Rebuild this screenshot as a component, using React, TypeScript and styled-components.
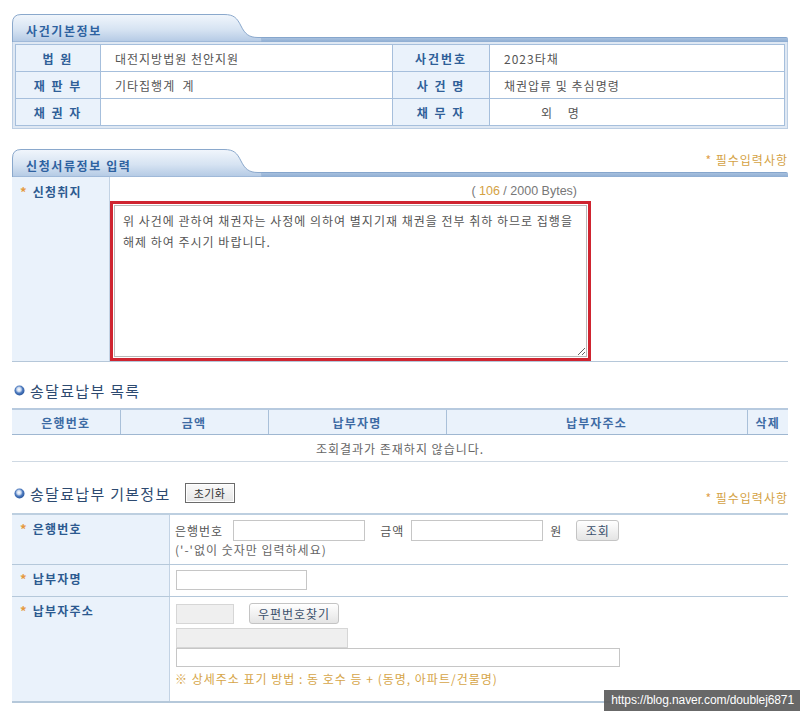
import React from 'react';
import styled, { createGlobalStyle } from 'styled-components';

const GlobalStyle = createGlobalStyle`
  html, body { margin: 0; padding: 0; background: #fff; }
  body {
    font-family: "Noto Sans CJK KR", "Liberation Sans", sans-serif;
    font-size: 12px;
    letter-spacing: 1px;
    color: #555;
  }
`;

const Page = styled.div`
  position: relative;
  width: 800px;
  height: 711px;
  overflow: hidden;
  box-sizing: border-box;
  padding: 14px 12px 0;
`;

// 탭 헤더 (사건기본정보 / 신청서류정보 입력)
const TabHeader = styled.div`
  display: flex;
  align-items: stretch;
  height: 28px;
`;

const Tab = styled.div`
  flex: 0 0 250px;
  display: grid;
  & > * { grid-area: 1 / 1; }
`;

const TabLabel = styled.div`
  padding: 8px 0 0 14px;
  font-size: 12px;
  font-weight: bold;
  letter-spacing: 1.6px;
  color: #2e62a0;
`;

const TabRest = styled.div`
  flex: 1;
  display: flex;
  flex-direction: column;
  justify-content: flex-end;
`;

const Bar = styled.div`
  height: 4px;
  background: linear-gradient(#a7c0de, #8eadd2);
  border-top: 1px solid #86a6cc;
  border-radius: 0 2px 0 0;
`;

const Required = styled.div`
  text-align: right;
  font-size: 12px;
  color: #d4a244;
  letter-spacing: 1px;
  margin-bottom: 4px;
  &::before { content: "* "; color: #e0a04c; }
`;

const TabShape = () => (
  <svg width="250" height="28" viewBox="0 0 250 28">
    <defs>
      <linearGradient id="tabg" x1="0" y1="0" x2="0" y2="1">
        <stop offset="0" stopColor="#f1f6fc" />
        <stop offset="0.55" stopColor="#d6e3f2" />
        <stop offset="1" stopColor="#b3c9e4" />
      </linearGradient>
    </defs>
    <path
      d="M0.5 28 V9 Q0.5 0.5 9 0.5 H212 C222 0.5 225 4 229 12 C233 20 237 23.5 246 23.5 H250 V28 Z"
      fill="url(#tabg)"
      stroke="#8aa8cc"
      strokeWidth="1"
    />
  </svg>
);

// 사건기본정보 표
const InfoBox = styled.div`
  background: #dfe8f3;
  border: 1px solid #bccee3;
  border-top: none;
  padding: 2px 2px 2px;
`;

const InfoTable = styled.table`
  width: 100%;
  border-collapse: collapse;
  table-layout: fixed;
  background: #fff;
  border: 1px solid #97b3d3;
`;

const InfoTh = styled.th`
  height: 26px;
  padding: 0;
  background: #eaf2fb;
  border: 1px solid #a6bfdc;
  color: #2f5f98;
  font-size: 12px;
  font-weight: bold;
  letter-spacing: 2px;
  white-space: pre;
`;

const InfoTd = styled.td`
  padding: 0 0 0 14px;
  border: 1px solid #a6bfdc;
  color: #555;
  white-space: pre;
`;

const Section = styled.section<{ $gap?: number }>`
  margin-top: ${p => p.$gap ?? 0}px;
`;

// 신청취지 행
const PurposeRow = styled.div`
  display: grid;
  grid-template-columns: 98px 1fr;
  border-bottom: 1px solid #b5c7d9;
`;

const LabelCell = styled.div<{ $pt?: number }>`
  background: #eaf2fb;
  border-right: 1px solid #c3d3e4;
  padding: ${p => p.$pt ?? 6}px 8px 0;
  color: #2c5a90;
  font-weight: bold;
  letter-spacing: 1.2px;
  line-height: 16px;
  &::before {
    content: "*";
    color: #e59a3e;
    font-size: 13px;
    margin-right: 5px;
  }
`;

const PurposeValue = styled.div`
  width: 481px;
`;

const Counter = styled.div`
  height: 24px;
  line-height: 28px;
  text-align: right;
  padding-right: 14px;
  color: #777;
  font-family: "Liberation Sans", "Noto Sans CJK KR", sans-serif;
  font-size: 12.5px;
  letter-spacing: 0;
  b { font-weight: normal; color: #d4a244; }
`;

const Frame = styled.div`
  height: 160px;
  box-sizing: border-box;
  border: 3px solid #cf2430;
  padding: 1px;
  display: flex;
`;

const Memo = styled.textarea`
  flex: 1;
  resize: both;
  border: 1px solid #b9b9b9;
  outline: none;
  padding: 4px 8px;
  margin: 0;
  font-family: "Noto Sans CJK KR", sans-serif;
  font-size: 12px;
  letter-spacing: 1px;
  line-height: 21px;
  color: #555;
  word-break: keep-all;
`;

// 소제목
const TitleRow = styled.div<{ $mt: number; $mb: number }>`
  display: flex;
  align-items: center;
  height: 20px;
  margin: ${p => p.$mt}px 0 ${p => p.$mb}px;
`;

const Title = styled.h3`
  display: flex;
  align-items: center;
  gap: 5px;
  margin: 0 0 0 2px;
  font-size: 15px;
  font-weight: normal;
  color: #2d4a70;
  letter-spacing: 1.3px;
`;

const ResetButton = styled.button`
  margin-left: 14px;
  height: 20px;
  width: 50px;
  padding: 0;
  border: 1px solid #6b6b6b;
  box-shadow: inset 0 0 0 1px #fff;
  background: linear-gradient(#fafafa, #e6e6e6);
  font-family: "Noto Sans CJK KR", sans-serif;
  font-size: 11px;
  letter-spacing: 0.5px;
  color: #333;
`;

const TitleRequired = styled(Required)`
  margin: 6px 0 0 auto;
  align-self: flex-start;
`;

const Bullet = () => (
  <svg width="11" height="11" viewBox="0 0 11 11">
    <defs>
      <radialGradient id="bul" cx="0.45" cy="0.4" r="0.6">
        <stop offset="0" stopColor="#ffffff" />
        <stop offset="0.35" stopColor="#c9d8ee" />
        <stop offset="0.6" stopColor="#4f7cc0" />
        <stop offset="1" stopColor="#27559c" />
      </radialGradient>
    </defs>
    <circle cx="5.5" cy="5.5" r="5" fill="url(#bul)" />
  </svg>
);

// 송달료납부 목록
const ListTable = styled.table`
  width: 100%;
  border-collapse: collapse;
  table-layout: fixed;
  border-top: 2px solid #b7cadf;
`;

const ListTh = styled.th`
  height: 24px;
  padding: 0;
  background: #eaf2fb;
  border-bottom: 1px solid #9fb7d1;
  border-left: 1px solid #a9c0d9;
  color: #3d6ba4;
  font-size: 12px;
  font-weight: bold;
  letter-spacing: 1.2px;
  &:first-child { border-left: none; }
`;

const EmptyCell = styled.td`
  height: 24px;
  text-align: center;
  color: #666;
  letter-spacing: 1px;
  border-bottom: 1px solid #cfd9e3;
`;

// 송달료납부 기본정보 폼
const Form = styled.div`
  border-top: 2px solid #bdcfe0;
`;

const FormRow = styled.div<{ $h: number; $last?: boolean }>`
  display: grid;
  grid-template-columns: 158px 1fr;
  height: ${p => p.$h}px;
  border-bottom: ${p => (p.$last ? 2 : 1)}px solid #b5c8da;
`;

const FormValue = styled.div<{ $pt: number }>`
  padding: ${p => p.$pt}px 0 0 5px;
`;

const Line = styled.div`
  display: flex;
  align-items: center;
  height: 21px;
  white-space: nowrap;
`;

const Text = styled.span<{ $ml?: number }>`
  margin-left: ${p => p.$ml ?? 0}px;
  color: #555;
`;

const Field = styled.input<{ $w: number; $h?: number; $ml?: number; $mt?: number; $gray?: boolean }>`
  display: block;
  box-sizing: border-box;
  width: ${p => p.$w}px;
  height: ${p => p.$h ?? 20}px;
  margin: ${p => p.$mt ?? 0}px 0 0 ${p => p.$ml ?? 0}px;
  border: 1px solid ${p => (p.$gray ? '#d6d6d6' : '#c6c6c6')};
  background: ${p => (p.$gray ? '#efefef' : '#fff')};
  padding: 0 4px;
  font-size: 12px;
  outline: none;
`;

const SmallButton = styled.button<{ $w: number; $ml?: number }>`
  width: ${p => p.$w}px;
  height: 21px;
  margin-left: ${p => p.$ml ?? 0}px;
  padding: 0;
  border: 1px solid #c4c4c4;
  border-radius: 3px;
  background: linear-gradient(#ffffff, #e4e4e4);
  font-family: "Noto Sans CJK KR", sans-serif;
  font-size: 12px;
  color: #3b506c;
  letter-spacing: 1px;
`;

const Hint = styled.div<{ $gold?: boolean; $mt?: number }>`
  margin-top: ${p => p.$mt ?? 0}px;
  line-height: 15px;
  color: ${p => (p.$gold ? '#d6a548' : '#666')};
  white-space: nowrap;
`;

const Watermark = styled.div`
  position: absolute;
  right: 0;
  bottom: 0;
  height: 21px;
  padding: 0 6px 0 7px;
  line-height: 21px;
  background: rgba(88, 88, 88, 0.9);
  color: #fff;
  font-family: "Liberation Sans", "Noto Sans", sans-serif;
  font-size: 12px;
  letter-spacing: -0.1px;
`;

const App = () => {
  return (
    <>
      <GlobalStyle />
      <Page>
        <Section>
          <TabHeader>
            <Tab>
              <TabShape />
              <TabLabel>사건기본정보</TabLabel>
            </Tab>
            <TabRest>
              <Bar />
            </TabRest>
          </TabHeader>
          <InfoBox>
            <InfoTable>
              <colgroup>
                <col style={{ width: 85 }} />
                <col style={{ width: 292 }} />
                <col style={{ width: 97 }} />
                <col />
              </colgroup>
              <tbody>
                <tr>
                  <InfoTh>법 원</InfoTh>
                  <InfoTd>대전지방법원 천안지원</InfoTd>
                  <InfoTh>사건번호</InfoTh>
                  <InfoTd>2023타채</InfoTd>
                </tr>
                <tr>
                  <InfoTh>재 판 부</InfoTh>
                  <InfoTd>기타집행계  계</InfoTd>
                  <InfoTh>사 건 명</InfoTh>
                  <InfoTd>채권압류 및 추심명령</InfoTd>
                </tr>
                <tr>
                  <InfoTh>채 권 자</InfoTh>
                  <InfoTd></InfoTd>
                  <InfoTh>채 무 자</InfoTh>
                  <InfoTd>          외    명</InfoTd>
                </tr>
              </tbody>
            </InfoTable>
          </InfoBox>
        </Section>

        <Section $gap={20}>
          <TabHeader>
            <Tab>
              <TabShape />
              <TabLabel>신청서류정보 입력</TabLabel>
            </Tab>
            <TabRest>
              <Required>필수입력사항</Required>
              <Bar />
            </TabRest>
          </TabHeader>
          <PurposeRow>
            <LabelCell $pt={7}>신청취지</LabelCell>
            <PurposeValue>
              <Counter>
                ( <b>106</b> / 2000 Bytes)
              </Counter>
              <Frame>
                <Memo
                  defaultValue="위 사건에 관하여 채권자는 사정에 의하여 별지기재 채권을 전부 취하 하므로 집행을 해제 하여 주시기 바랍니다."
                />
              </Frame>
            </PurposeValue>
          </PurposeRow>
        </Section>

        <Section>
          <TitleRow $mt={18} $mb={8}>
            <Title>
              <Bullet />
              송달료납부 목록
            </Title>
          </TitleRow>
          <ListTable>
            <colgroup>
              <col style={{ width: 108 }} />
              <col style={{ width: 148 }} />
              <col style={{ width: 178 }} />
              <col style={{ width: 301 }} />
              <col />
            </colgroup>
            <thead>
              <tr>
                <ListTh>은행번호</ListTh>
                <ListTh>금액</ListTh>
                <ListTh>납부자명</ListTh>
                <ListTh>납부자주소</ListTh>
                <ListTh>삭제</ListTh>
              </tr>
            </thead>
            <tbody>
              <tr>
                <EmptyCell colSpan={5}>조회결과가 존재하지 않습니다.</EmptyCell>
              </tr>
            </tbody>
          </ListTable>
        </Section>

        <Section>
          <TitleRow $mt={21} $mb={10}>
            <Title>
              <Bullet />
              송달료납부 기본정보
            </Title>
            <ResetButton>초기화</ResetButton>
            <TitleRequired>필수입력사항</TitleRequired>
          </TitleRow>
          <Form>
            <FormRow $h={49}>
              <LabelCell>은행번호</LabelCell>
              <FormValue $pt={5}>
                <Line>
                  <Text>은행번호</Text>
                  <Field $w={132} $h={21} $ml={10} />
                  <Text $ml={15}>금액</Text>
                  <Field $w={132} $h={21} $ml={7} />
                  <Text $ml={7}>원</Text>
                  <SmallButton $w={43} $ml={14}>조회</SmallButton>
                </Line>
                <Hint $mt={1}>('-'없이 숫자만 입력하세요)</Hint>
              </FormValue>
            </FormRow>
            <FormRow $h={31}>
              <LabelCell>납부자명</LabelCell>
              <FormValue $pt={5}>
                <Field $w={131} $ml={1} />
              </FormValue>
            </FormRow>
            <FormRow $h={104} $last>
              <LabelCell>납부자주소</LabelCell>
              <FormValue $pt={6}>
                <Line>
                  <Field $w={58} $ml={1} $gray />
                  <SmallButton $w={90} $ml={15}>우편번호찾기</SmallButton>
                </Line>
                <Field $w={172} $ml={1} $mt={4} $gray />
                <Field $w={444} $h={19} $ml={1} />
                <Hint $gold $mt={4}>※ 상세주소 표기 방법 : 동 호수 등 + (동명, 아파트/건물명)</Hint>
              </FormValue>
            </FormRow>
          </Form>
        </Section>

        <Watermark>https://blog.naver.com/doublej6871</Watermark>
      </Page>
    </>
  );
};

export default App;
